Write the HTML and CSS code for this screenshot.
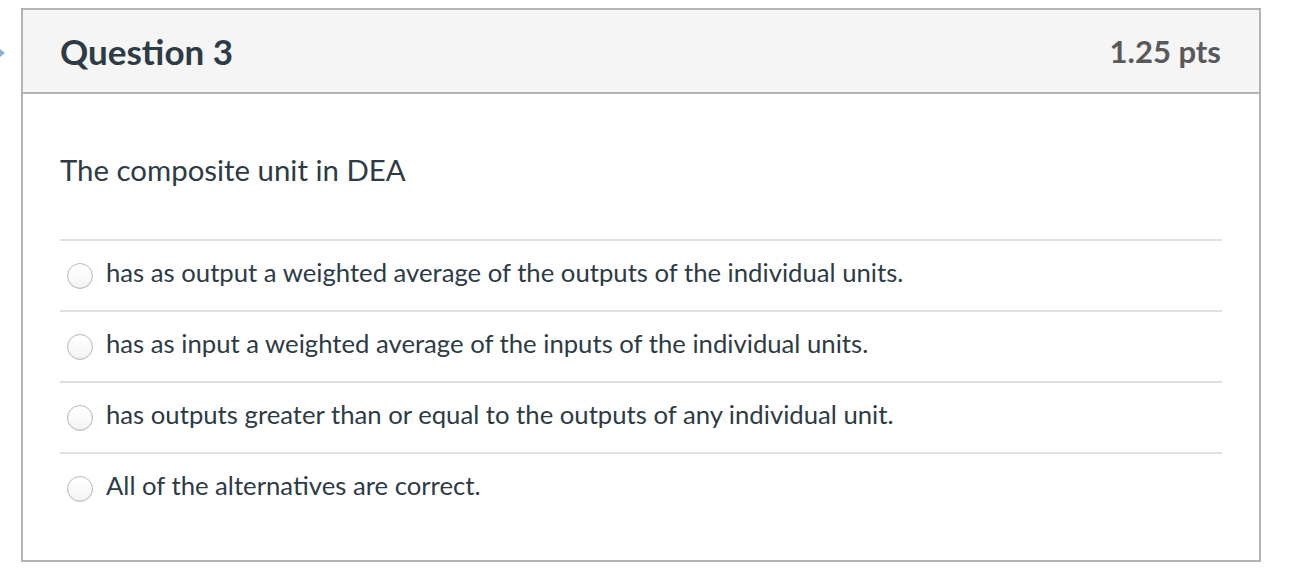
FILE: index.html
```html
<!DOCTYPE html>
<html lang="en">
<head>
    <meta charset="UTF-8">
    <meta name="viewport" content="width=device-width, initial-scale=1.0">
    <title>Question 3</title>
    <link rel="stylesheet" href="styles.css">
</head>
<body>
    <div class="quiz">
        <div class="marker">
            <svg width="8" height="16" viewBox="0 0 8 16"><path d="M-4 1 L5 8 L-4 15 Z" fill="#8fb0cc"/></svg>
        </div>

        <div class="question">
            <div class="question-header">
                <h2 class="question-title">Question 3</h2>
                <span class="question-points">1.25 pts</span>
            </div>

            <div class="question-body">
                <p class="question-text">The composite unit in DEA</p>

                <div class="answers">
                    <label class="answer">
                        <span class="radio"></span>
                        <span class="answer-text">has as output a weighted average of the outputs of the individual units.</span>
                    </label>
                    <label class="answer">
                        <span class="radio"></span>
                        <span class="answer-text">has as input a weighted average of the inputs of the individual units.</span>
                    </label>
                    <label class="answer">
                        <span class="radio"></span>
                        <span class="answer-text">has outputs greater than or equal to the outputs of any individual unit.</span>
                    </label>
                    <label class="answer">
                        <span class="radio"></span>
                        <span class="answer-text">All of the alternatives are correct.</span>
                    </label>
                </div>
            </div>
        </div>
    </div>
</body>
</html>
```

FILE: styles.css
```css
body {
    margin: 0;
    padding-top: 8px;
    font-family: Lato, "Open Sans", sans-serif;
    background-color: #fff;
    color: #2d3b45;
}
.quiz {
    display: flex;
}
.marker {
    width: 21px;
    padding-top: 37px;
}
.marker svg {
    display: block;
}
.question {
    width: 1236px;
    height: 550px;
    border: 2px solid #b3b3b3;
    display: flex;
    flex-direction: column;
}
.question-header {
    display: flex;
    justify-content: space-between;
    align-items: center;
    height: 82px;
    padding: 0 38px 0 37px;
    background-color: #f5f5f5;
    border-bottom: 2px solid #b3b3b3;
}
.question-title {
    margin: 0;
    font-size: 35px;
    font-weight: 700;
    color: #2d3b45;
}
.question-points {
    font-size: 31px;
    font-weight: 700;
    color: #595959;
}
.question-body {
    padding: 0 37px 0 37px;
}
.question-text {
    margin: 56px 0 0 0;
    font-size: 29.4px;
    line-height: 40px;
    height: 89px;
}
.answer {
    display: flex;
    align-items: center;
    height: 69px;
    border-top: 2px solid #e0e0e0;
}
.radio {
    flex: none;
    width: 24px;
    height: 24px;
    margin: 0 13px 0 7px;
    border: 1px solid #b9b9b9;
    border-radius: 50%;
    background: linear-gradient(#fff, #f4f4f4);
    box-shadow: inset 0 -1px 1px rgba(0,0,0,0.08);
}
.answer-text {
    font-size: 25.7px;
    padding-bottom: 7px;
}
```
